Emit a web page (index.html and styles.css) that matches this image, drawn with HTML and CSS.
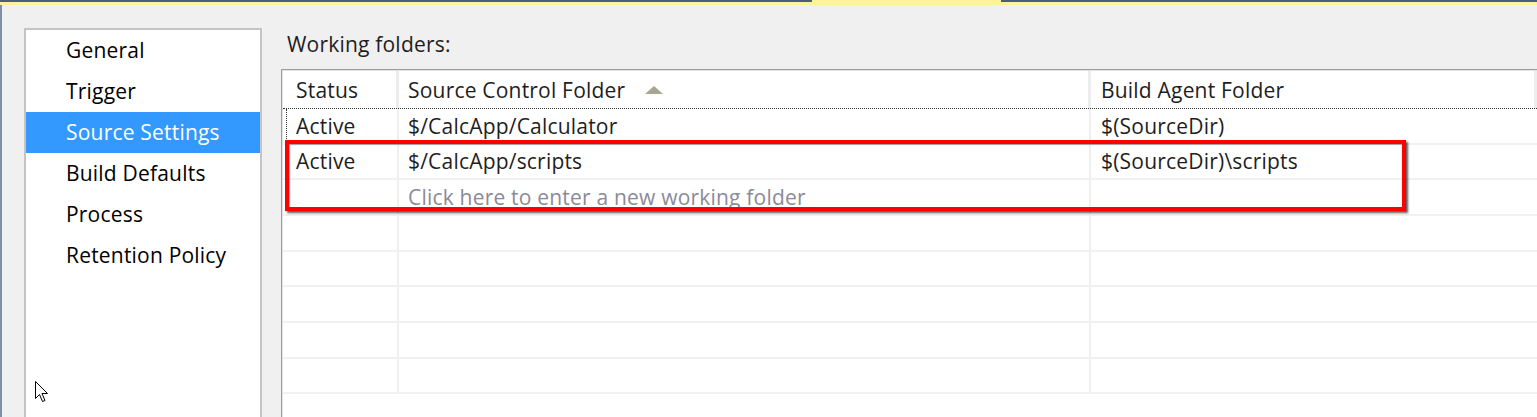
FILE: index.html
```html
<!DOCTYPE html>
<html>
<head>
<meta charset="utf-8">
<link rel="stylesheet" href="styles.css">
</head>
<body>
<div class="topbar">
  <div class="seg dark s1"></div>
  <div class="seg yellow s2"></div>
  <div class="seg dark s3"></div>
</div>
<div class="glow"></div>
<div class="window">
  <div class="nav">
    <div class="nav-item">General</div>
    <div class="nav-item">Trigger</div>
    <div class="nav-item selected">Source Settings</div>
    <div class="nav-item">Build Defaults</div>
    <div class="nav-item">Process</div>
    <div class="nav-item">Retention Policy</div>
  </div>
  <div class="content">
    <div class="heading">Working folders:</div>
    <div class="grid">
      <div class="row header">
        <div class="cell c1">Status</div>
        <div class="cell c2">Source Control Folder <span class="sort"></span></div>
        <div class="cell c3">Build Agent Folder</div>
      </div>
      <div class="row focus">
        <div class="cell c1">Active</div>
        <div class="cell c2">$/CalcApp/Calculator</div>
        <div class="cell c3">$(SourceDir)</div>
      </div>
      <div class="row">
        <div class="cell c1">Active</div>
        <div class="cell c2">$/CalcApp/scripts</div>
        <div class="cell c3">$(SourceDir)\scripts</div>
      </div>
      <div class="row">
        <div class="cell c1"></div>
        <div class="cell c2 hint">Click here to enter a new working folder</div>
        <div class="cell c3"></div>
      </div>
      <div class="row"><div class="cell c1"></div><div class="cell c2"></div><div class="cell c3"></div></div>
      <div class="row"><div class="cell c1"></div><div class="cell c2"></div><div class="cell c3"></div></div>
      <div class="row"><div class="cell c1"></div><div class="cell c2"></div><div class="cell c3"></div></div>
      <div class="row"><div class="cell c1"></div><div class="cell c2"></div><div class="cell c3"></div></div>
      <div class="row"><div class="cell c1"></div><div class="cell c2"></div><div class="cell c3"></div></div>
      <div class="highlight"></div>
    </div>
  </div>
</div>
<svg class="cursor" width="14" height="24" viewBox="0 0 14 24">
  <path d="M0.5 0.5 L0.5 17.5 L4.5 13.5 L7.5 20.5 L10 19.5 L7 12.5 L12.5 12.5 Z" fill="#fff" stroke="#000" stroke-width="1"/>
</svg>
</body>
</html>
```
FILE: styles.css
```css
html, body {
  margin: 0;
  padding: 0;
  height: 417px;
  overflow: hidden;
}
body {
  background: #f0f0f0;
  font-family: "Open Sans", "Noto Sans", sans-serif;
  font-size: 21px;
  letter-spacing: 0.2px;
  color: #1e1e1e;
  position: relative;
}
.topbar {
  display: flex;
  height: 2px;
}
.seg.dark { background: #4d5d72; }
.seg.yellow { background: #fff29d; }
.s1 { width: 812px; }
.s2 { width: 189px; }
.s3 { flex: 1; }
.glow {
  height: 3px;
  background: #fff29d;
}
.window {
  display: flex;
  border-left: 2px solid #7d8fab;
  height: 412px;
}
.nav {
  margin-left: 22px;
  margin-top: 23px;
  width: 234px;
  height: 400px;
  background: #fff;
  border: 2px solid #c4c4c4;
  border-bottom: none;
  flex: none;
}
.nav-item {
  height: 41px;
  line-height: 41px;
  padding-left: 40px;
  color: #000;
  white-space: nowrap;
}
.nav-item.selected {
  background: #3399ff;
  color: #fff;
}
.content {
  margin-left: 19px;
  flex: 1;
  display: flex;
  flex-direction: column;
  min-width: 0;
}
.heading {
  padding-left: 6px;
  margin-top: 26px;
  height: 38px;
  line-height: 26px;
  color: #1e1e1e;
  white-space: nowrap;
}
.grid {
  position: relative;
  background: #fff;
  border-left: 1px solid #9d9d9d;
  border-top: 1px solid #9d9d9d;
  flex: 1;
  box-shadow: inset 1px 1px 0 #e3e3e3;
  padding-left: 1px;
  padding-top: 1px;
}
.row {
  display: grid;
  grid-template-columns: 116px 692px 1fr;
  height: 35.67px;
  border-bottom: 2px solid #f1f1f1;
  box-sizing: border-box;
}
.row.header {
  height: 38px;
  border-bottom: 1px dotted #333;
}
.row.header .cell {
  border-right: 3px solid #ededed;
  padding-top: 1px;
}
.row.focus {
  position: relative;
}
.row.focus::before {
  content: "";
  position: absolute;
  left: 3px;
  top: 0;
  bottom: 0;
  border-left: 1px dotted #333;
}
.cell {
  display: flex;
  align-items: center;
  white-space: nowrap;
  border-right: 2px solid #efefef;
  padding-left: 9px;
  overflow: hidden;
}
.c1 { padding-left: 13px; }
.c3 { border-right: none; padding-left: 10px; }
.hint { color: #8a8a9a; }
.sort {
  display: inline-block;
  width: 0;
  height: 0;
  margin-left: 20px;
  border-left: 9px solid transparent;
  border-right: 9px solid transparent;
  border-bottom: 8px solid #a7a690;
}
.highlight {
  position: absolute;
  left: 3px;
  top: 70px;
  width: 1113px;
  height: 63px;
  border: 4px solid #ff0000;
  box-shadow: 2px 2px 2px rgba(0, 0, 0, 0.65), inset 1px 1px 1px rgba(0,0,0,0.35);
}
.cursor {
  position: absolute;
  left: 35px;
  top: 381px;
}
```
